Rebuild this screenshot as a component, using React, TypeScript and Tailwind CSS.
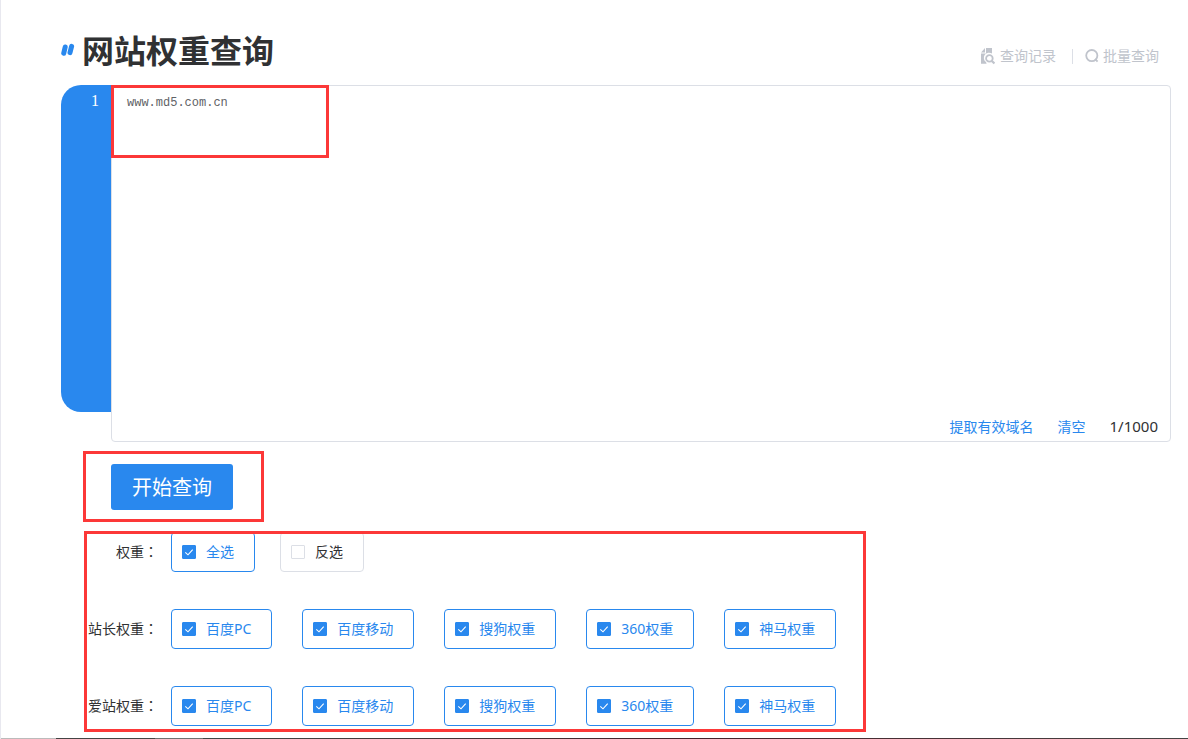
import { useState } from 'react';

const targets = ['百度PC', '百度移动', '搜狗权重', '360权重', '神马权重'];

function Option({ label, checked, onChange }: { label: string; checked: boolean; onChange: () => void }) {
  return (
    <label
      className={
        'flex h-10 cursor-pointer items-center rounded border pl-[10px] pr-5 text-sm whitespace-nowrap ' +
        (checked ? 'border-[#2988ee] text-[#2988ee]' : 'border-[#dcdfe6] text-[#303133]')
      }
    >
      <span className="mr-[10px] grid size-[14px] place-items-center">
        <input
          type="checkbox"
          checked={checked}
          onChange={onChange}
          className="col-start-1 row-start-1 size-[14px] appearance-none rounded-[1px] border border-[#dcdfe6] bg-white checked:border-[#2988ee] checked:bg-[#2988ee]"
        />
        {checked && (
          <svg viewBox="0 0 14 14" className="pointer-events-none col-start-1 row-start-1 size-[14px]" fill="none" stroke="#fff" strokeWidth="1.1">
            <path d="M3.3 7.3 6 9.8 10.7 4.6" />
          </svg>
        )}
      </span>
      {label}
    </label>
  );
}

function RowLabel({ text }: { text: string }) {
  return (
    <legend className="float-left h-10 w-[75px] pr-px text-right text-sm leading-10 text-[#303133] whitespace-nowrap">
      {text}
      <span className="font-['Noto_Sans_CJK_TC',sans-serif] leading-none" lang="zh-Hant">：</span>
    </legend>
  );
}

function TargetRow({ title, state, toggle }: { title: string; state: boolean[]; toggle: (i: number) => void }) {
  return (
    <fieldset className="h-10">
      <RowLabel text={title} />
      <div className="flex gap-[30px] pl-3">
        {targets.map((t, i) => (
          <Option key={t} label={t} checked={state[i]} onChange={() => toggle(i)} />
        ))}
      </div>
    </fieldset>
  );
}

export default function App() {
  const [domains, setDomains] = useState('www.md5.com.cn');
  const [master, setMaster] = useState(targets.map(() => true));
  const [aizhan, setAizhan] = useState(targets.map(() => true));
  const lines = domains.split('\n');
  const all = [...master, ...aizhan].every(Boolean);
  const flip = (list: boolean[], i: number) => list.map((v, n) => (n === i ? !v : v));

  return (
    <div
      lang="zh-CN"
      className="flex min-h-screen flex-col border-l border-[#e8e8ef] bg-white font-['Noto_Sans','Noto_Sans_CJK_SC',sans-serif] text-[#303133]"
    >
      <main className="pl-[60px] pr-[17px]">
        <header className="flex h-[85px] items-end justify-between pb-[14px] pr-3">
          <div className="flex h-10 items-center">
            <svg viewBox="0 0 14 16" className="mr-[7px] h-4 w-[14px]" stroke="#2988ee" strokeWidth="5" strokeLinecap="round">
              <path d="M4.2 4 2.7 10.3M10.6 3.3 9 9.6" />
            </svg>
            <h1 className="text-[32px] leading-10 font-bold">网站权重查询</h1>
          </div>
          <nav className="flex h-[30px] items-center text-sm text-[#c0c4cc]">
            <a href="#history" className="flex items-center gap-[5px]">
              <svg viewBox="0 0 15 17" className="h-[17px] w-[15px]">
                <path d="M6 0h6v5.6a5 5 0 0 0-6 8.4l.6 1.8H1V5.6h5zM1 4.4 5 0v4.4z" fill="currentColor" />
                <circle cx="9.4" cy="10.4" r="3.3" fill="none" stroke="currentColor" strokeWidth="1.8" />
                <path d="m11.6 12.7 2.8 2.8" stroke="currentColor" strokeWidth="2.2" />
              </svg>
              查询记录
            </a>
            <span className="mr-3 ml-4 h-[15px] w-px bg-[#dcdfe6]" />
            <a href="#batch" className="flex items-center gap-1">
              <svg viewBox="0 0 14 14" className="size-[14px]" fill="none" stroke="currentColor" strokeWidth="1.8">
                <circle cx="6.8" cy="6.6" r="5.6" />
                <path d="m10 10 2.6 2.6" />
              </svg>
              批量查询
            </a>
          </nav>
        </header>

        <section className="flex items-start">
          <div className="h-[327px] w-[50px] overflow-hidden rounded-l-[20px] bg-[#2988ee] pt-1 pr-3 text-right font-['Liberation_Serif',serif] text-base text-white">
            {lines.map((_, i) => (
              <div key={i}>{i + 1}</div>
            ))}
          </div>
          <div className="relative flex h-[357px] flex-1 flex-col rounded border border-[#dcdfe6]">
            <textarea
              aria-label="域名列表"
              value={domains}
              onChange={(e) => setDomains(e.target.value)}
              className="w-full flex-1 resize-none px-[15px] pt-[9px] font-['Liberation_Mono',monospace] text-xs text-[#606266] outline-none"
            />
            <div className="flex h-7 items-center justify-end pr-3 text-sm">
              <button type="button" className="mr-6 text-[#2988ee]">提取有效域名</button>
              <button type="button" className="mr-6 text-[#2988ee]" onClick={() => setDomains('')}>清空</button>
              <span className="text-[15px]">{lines.length}/1000</span>
            </div>
            <div className="pointer-events-none absolute -top-px -left-px h-[73px] w-[218px] border-3 border-[#fc3838]" />
          </div>
        </section>

        <div className="mt-[9px] ml-[22px] w-[181px] border-3 border-[#fc3838] pt-[10px] pb-[9px] pl-[25px]">
          <button type="button" className="block h-[46px] w-[122px] rounded-[3px] bg-[#2988ee] pt-0.5 text-xl text-white">开始查询</button>
        </div>

        <section className="relative mt-[10px] ml-[23px] w-[782px] pb-[6px]">
          <div className="flex flex-col gap-[37px]">
            <fieldset className="h-10">
              <RowLabel text="权重" />
              <div className="flex gap-[25px] pl-3">
                <Option
                  label="全选"
                  checked={all}
                  onChange={() => {
                    setMaster(targets.map(() => !all));
                    setAizhan(targets.map(() => !all));
                  }}
                />
                <Option
                  label="反选"
                  checked={false}
                  onChange={() => {
                    setMaster(master.map((v) => !v));
                    setAizhan(aizhan.map((v) => !v));
                  }}
                />
              </div>
            </fieldset>
            <TargetRow title="站长权重" state={master} toggle={(i) => setMaster(flip(master, i))} />
            <TargetRow title="爱站权重" state={aizhan} toggle={(i) => setAizhan(flip(aizhan, i))} />
          </div>
          <div className="pointer-events-none absolute -top-px inset-x-0 bottom-0 border-3 border-[#fc3838]" />
        </section>
      </main>
      <div className="mt-auto flex h-px">
        <div className="w-[55px] bg-[#bbbbbb]" />
        <div className="w-[99px] bg-[#444444]" />
        <div className="w-12 bg-[#707070]" />
        <div className="flex-1 bg-linear-to-r from-[#3f4646] via-[#45202a] to-[#444444]" />
      </div>
    </div>
  );
}
